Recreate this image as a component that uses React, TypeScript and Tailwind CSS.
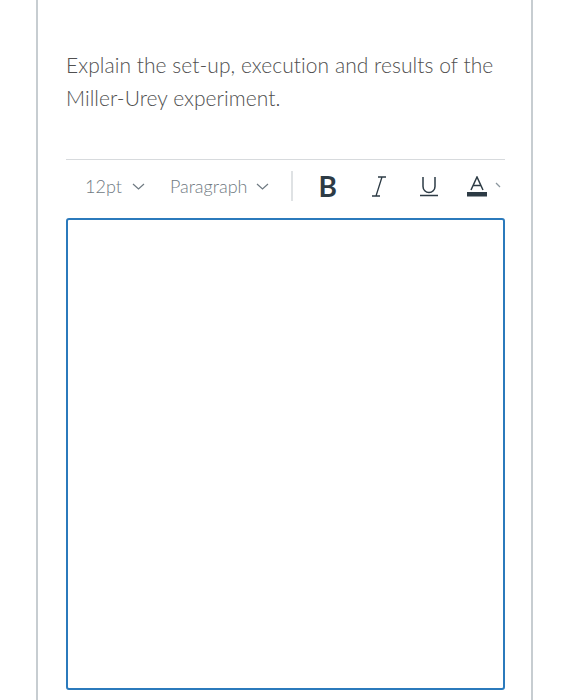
import React from 'react';

const Chevron: React.FC<{ className?: string }> = ({ className }) => (
    <svg viewBox="0 0 13 7" className={className} fill="none" stroke="currentColor" strokeWidth="1.2">
        <path d="M1 1 L6.5 6 L12 1" />
    </svg>
);

const App: React.FC = () => {
    return (
        <div className="w-full h-[700px] bg-white overflow-hidden" style={{ fontFamily: 'Lato, "Open Sans", sans-serif' }}>
            <div className="ml-[36px] w-[497px] h-full border-x-2 border-[#c7cdd1] pl-[28px] pr-[26px] pt-[48px]">
                {/* Question text */}
                <p className="text-[21px] leading-[33px] text-[#505050] font-light tracking-[0.05px]">
                    Explain the set-up, execution and results of the Miller-Urey experiment.
                </p>

                {/* Toolbar */}
                <div className="mt-[45px] border-t border-[#d7dadd] h-[53px] flex items-center">
                    <div className="flex items-center pl-[19px] text-[18px] text-[#6f7a82] font-light">
                        <span>12pt</span>
                        <Chevron className="w-[13px] h-[7px] ml-[10px]" />
                        <span className="ml-[25px]">Paragraph</span>
                        <Chevron className="w-[13px] h-[7px] ml-[9px]" />
                    </div>
                    <div className="w-[2px] h-[30px] bg-[#dfe2e4] ml-[22px]" />
                    <div className="flex items-center text-[#2d3b45]">
                        <span className="ml-[25px] text-[28px] font-bold leading-none">B</span>
                        {/* italic */}
                        <svg viewBox="0 0 16 21" className="w-[16px] h-[21px] ml-[34px]" fill="none" stroke="currentColor" strokeWidth="1.3">
                            <path d="M7 1 H15 M1 20 H9 M11 1 L5 20" />
                        </svg>
                        {/* underline */}
                        <svg viewBox="0 0 18 21" className="w-[18px] h-[21px] ml-[33px]" fill="none" stroke="currentColor" strokeWidth="1.5">
                            <path d="M3 1 V10.5 A6 6 0 0 0 15 10.5 V1 M0 19.5 H18" />
                        </svg>
                        {/* text colour */}
                        <svg viewBox="0 0 20 21" className="w-[20px] h-[21px] ml-[29px]" fill="none" stroke="currentColor" strokeWidth="1.5">
                            <path d="M4 14 L10 1 L16 14 M6.5 9.5 H13.5" />
                            <rect x="0" y="16" width="20" height="4.5" fill="currentColor" stroke="none" />
                        </svg>
                        <svg viewBox="0 0 6 6" className="w-[6px] h-[6px] ml-[8px] -mt-[3px] text-[#8b969e]" fill="none" stroke="currentColor" strokeWidth="1.2">
                            <path d="M1 1 L5 5" />
                        </svg>
                    </div>
                </div>

                {/* Editor area */}
                <div className="mt-[6px] h-[472px] rounded-[3px] border-2 border-[#2b7abc] bg-white" />
            </div>
        </div>
    );
};

export default App;
